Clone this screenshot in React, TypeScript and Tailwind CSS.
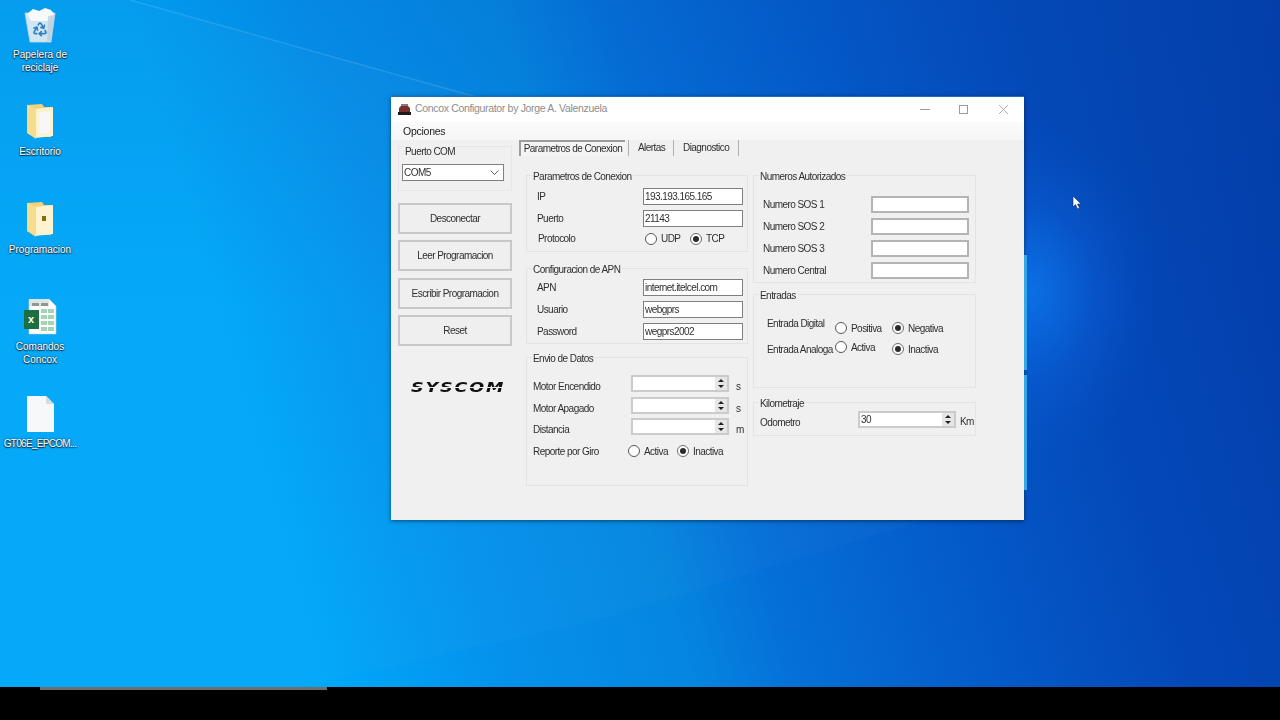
import { Recycle } from 'lucide-react';
import type { ReactNode } from 'react';

function RecycleBinIcon() {
  return (
    <svg width="32" height="36" viewBox="0 0 32 36">
      <path d="M1 6 L31 6 L27 35 L6 35 Z" fill="#e6eef3" fillOpacity="0.9" stroke="#c6d4de" strokeWidth="0.8" />
      <path d="M3 7 L9 2 L15 4 L21 1 L27 3 L30 7 L26 14 L7 14 Z" fill="#f7f9fa" />
      <path d="M24 9 L30 8 L27 34 L23 34 Z" fill="#b9cbd8" fillOpacity="0.7" />
    </svg>
  );
}

function FolderIcon({ mark }: { mark?: boolean }) {
  return (
    <svg width="27" height="36" viewBox="0 0 27 36">
      <path d="M0 1 L15 0 L17 3 L24 3 L24 33 L9 33 L0 29 Z" fill="#f2d27a" />
      <path d="M8 5 L26 3 L26 32 L8 34 Z" fill="#fdf3cf" />
      <path d="M0 1 L9 5 L9 35 L0 29 Z" fill="#f6dc8e" />
      {mark ? <rect x="15" y="14" width="4" height="5" fill="#8a6a10" /> : <path d="M12 8 H23 V29 H12 Z" fill="#f6f7f6" />}
    </svg>
  );
}

function ExcelIcon() {
  return (
    <svg width="33" height="36" viewBox="0 0 33 36">
      <path d="M5 0 H25 L32 7 V35 H5 Z" fill="#fbfcfb" stroke="#c9cfcc" strokeWidth="0.6" />
      <path d="M5 0 H25 V7 H5 Z" fill="#dfe3e1" />
      <path d="M8 4 H15 V7 H8 Z M17 4 H24 V7 H17 Z" fill="#8f9794" />
      <g fill="#a6d2b6">
        <rect x="17" y="10" width="6" height="4" />
        <rect x="24" y="10" width="6" height="4" />
        <rect x="17" y="16" width="6" height="4" />
        <rect x="24" y="16" width="6" height="4" />
        <rect x="17" y="22" width="6" height="4" />
        <rect x="24" y="22" width="6" height="4" />
        <rect x="17" y="28" width="6" height="4" />
        <rect x="24" y="28" width="6" height="4" />
      </g>
    </svg>
  );
}

function FileIcon() {
  return (
    <svg width="27" height="36" viewBox="0 0 27 36">
      <path d="M0 0 H19 L27 8 V36 H0 Z" fill="#f7f8f9" />
      <path d="M19 0 L27 8 H19 Z" fill="#d6dbe0" />
    </svg>
  );
}

function DesktopItem({ icon, label, narrow }: { icon: ReactNode; label: string[]; narrow?: boolean }) {
  return (
    <div className="flex h-[97.3px] w-[80px] flex-col items-center">
      <div className="relative flex h-[36px] items-center justify-center">{icon}</div>
      <div
        className={`mt-[5px] text-center leading-[13px] text-white [text-shadow:0_0_2px_#123,0_1px_1px_#123] ${
          narrow ? 'text-[10px] tracking-[-0.7px]' : 'text-[10px]'
        }`}
      >
        {label.map((line) => (
          <div key={line}>{line}</div>
        ))}
      </div>
    </div>
  );
}

function Group({ title, className, children }: { title: string; className: string; children?: ReactNode }) {
  return (
    <div className={`border border-[#e3e3e3] ${className}`}>
      <div className="-mt-[6px] ml-[5px] h-[14px] w-fit bg-[#f0f0f0] px-[1px] leading-[14px]">{title}</div>
      {children}
    </div>
  );
}

function TextField({ value = '', wide }: { value?: string; wide?: boolean }) {
  return (
    <input
      readOnly
      value={value}
      className={
        wide
          ? 'h-[17px] w-[98px] border-2 border-[#b4b4b4] bg-white px-[1px] outline-none'
          : 'h-[17px] w-[100px] border border-[#7f7f7f] bg-white px-[1px] outline-none'
      }
    />
  );
}

function Spinner({ value = '' }: { value?: string }) {
  return (
    <div className="flex h-[17px] w-[98px] border-2 border-[#cbcbcb] bg-white">
      <input readOnly value={value} className="h-full min-w-0 flex-1 bg-white px-[1px] leading-[12px] outline-none" />
      <div className="flex w-[12px] flex-col items-center justify-center gap-[3px] bg-[#e6e6e6]">
        <div className="h-0 w-0 border-x-[3px] border-b-[3px] border-x-transparent border-b-[#222]" />
        <div className="h-0 w-0 border-x-[3px] border-t-[3px] border-x-transparent border-t-[#222]" />
      </div>
    </div>
  );
}

function Radio({ label, checked, className = '' }: { label: string; checked?: boolean; className?: string }) {
  return (
    <div className={`flex items-center gap-[4px] ${className}`}>
      <div
        className={`flex h-[12px] w-[12px] items-center justify-center rounded-full border bg-white ${
          checked ? 'border-[#6a6a6a] bg-[#f4f4f4]' : 'border-[#555]'
        }`}
      >
        {checked ? <div className="h-[6px] w-[6px] rounded-full bg-[#2b2b2b]" /> : null}
      </div>
      <span>{label}</span>
    </div>
  );
}

function ActionButton({ label }: { label: string }) {
  return (
    <div className="flex h-[31px] w-[114px] items-center justify-center border-2 border-[#c8c8c8] bg-[#efefef]">
      {label}
    </div>
  );
}

function FieldRow({ label, children, labelWidth, indent }: { label: string; children: ReactNode; labelWidth: string; indent: string }) {
  return (
    <div className={`flex h-[17px] items-center ${indent}`}>
      <span className={labelWidth}>{label}</span>
      {children}
    </div>
  );
}

function SpinRow({ label, unit }: { label: string; unit: string }) {
  return (
    <div className="flex h-[17px] items-center pl-[6px]">
      <span className="mt-[6px] w-[98px]">{label}</span>
      <Spinner />
      <span className="ml-[7px] mt-[6px]">{unit}</span>
    </div>
  );
}

function ConfigWindow() {
  return (
    <div className="absolute left-[391px] top-[96px] flex h-[424px] w-[633px] flex-col border-t border-[#1b6fb5] bg-[#f0f0f0] text-[10px] tracking-[-0.55px] text-[#2f2f2f] shadow-[0_1px_4px_rgba(0,0,0,0.5)] blur-[0.35px] [font-family:'Liberation_Sans',Arial,sans-serif]">
      <div className="flex h-[25px] items-center bg-white pl-[7px]">
        <svg className="-mt-[2px]" width="13" height="12" viewBox="0 0 13 12">
          <path d="M3 1 H10 V3 H3 Z" fill="#8c7a78" />
          <path d="M1 5 L3 3 H10 L12 5 V10 H1 Z" fill="#7a2f2a" />
          <rect x="0" y="9" width="13" height="3" fill="#1e1a1a" />
        </svg>
        <span className="mb-[1px] ml-[4px] text-[10.5px] tracking-[-0.33px] text-[#8d8d8d]">Concox Configurator by Jorge A. Valenzuela</span>
        <div className="ml-auto flex items-center">
          <div className="mr-[29px] h-px w-[10px] bg-[#9a9a9a]" />
          <div className="mr-[31px] h-[9px] w-[9px] border border-[#9a9a9a]" />
          <svg className="mr-[16px]" width="9" height="9" viewBox="0 0 9 9">
            <path d="M0 0 L9 9 M9 0 L0 9" stroke="#9a9a9a" strokeWidth="0.8" />
          </svg>
        </div>
      </div>
      <div className="h-[18px] bg-gradient-to-b from-[#fafafa] to-[#f6f6f6] pl-[12px] text-[10.5px] leading-[18px] tracking-[-0.25px] text-[#222]">Opciones</div>
      <div className="flex pl-[7px]">
        <div className="mt-[6px] flex w-[114px] flex-col">
          <div className="h-[45px] border border-[#e6e6e6]">
            <div className="-mt-[2px] ml-[5px] w-fit bg-[#f0f0f0] px-[1px] leading-[14px]">Puerto COM</div>
            <div className="ml-[3px] mt-[5px] flex h-[17px] w-[102px] items-center justify-between border border-[#7f7f7f] bg-white pl-[1px] pr-[4px]">
              <span>COM5</span>
              <svg width="9" height="5" viewBox="0 0 9 5">
                <path d="M0.5 0.5 L4.5 4.5 L8.5 0.5" fill="none" stroke="#666" strokeWidth="1" />
              </svg>
            </div>
          </div>
          <div className="mt-[11.5px] flex flex-col gap-[6.5px]">
            <ActionButton label="Desconectar" />
            <ActionButton label="Leer Programacion" />
            <ActionButton label="Escribir Programacion" />
            <ActionButton label="Reset" />
          </div>
          <div className="relative ml-[13px] mt-[34px] w-fit origin-left scale-x-[1.25] text-[14px] font-bold italic leading-[14px] tracking-[1.5px] text-[#111] [font-family:'DejaVu_Sans',sans-serif]">
            SYSCOM
            <div className="absolute inset-x-0 top-[7px] h-px bg-[#f0f0f0]" />
          </div>
        </div>
        <div className="ml-[7px] flex flex-col">
          <div className="flex h-[16px] items-stretch whitespace-nowrap leading-[16px]">
            <div className="w-[106px] border-l-2 border-t-2 border-[#9c9c9c] bg-[#f4f4f4] text-center leading-[14px]">Parametros de Conexion</div>
            <div className="ml-[3px] w-[45px] border-l border-[#b0b0b0] pl-[9px]">Alertas</div>
            <div className="w-[65px] border-l border-[#b0b0b0] pl-[9px]">Diagnostico</div>
            <div className="border-l border-[#b0b0b0]" />
          </div>
          <div className="ml-[7px] mt-[19px] flex gap-[5px]">
            <div className="flex w-[222px] flex-col">
              <Group title="Parametros de Conexion" className="h-[77px]">
                <div className="mt-[4px] flex flex-col gap-[5px]">
                  <FieldRow label="IP" labelWidth="w-[106px]" indent="pl-[10px]">
                    <TextField value="193.193.165.165" />
                  </FieldRow>
                  <FieldRow label="Puerto" labelWidth="w-[106px]" indent="pl-[10px]">
                    <TextField value="21143" />
                  </FieldRow>
                  <FieldRow label="Protocolo" labelWidth="w-[107px]" indent="pl-[11px] -mt-[2px]">
                    <Radio label="UDP" className="w-[45px]" />
                    <Radio label="TCP" checked />
                  </FieldRow>
                </div>
              </Group>
              <Group title="Configuracion de APN" className="mt-[16px] h-[76px]">
                <div className="mt-[2px] flex flex-col gap-[5px]">
                  <FieldRow label="APN" labelWidth="w-[106px]" indent="pl-[10px]">
                    <TextField value="internet.itelcel.com" />
                  </FieldRow>
                  <FieldRow label="Usuario" labelWidth="w-[106px]" indent="pl-[10px]">
                    <TextField value="webgprs" />
                  </FieldRow>
                  <FieldRow label="Password" labelWidth="w-[106px]" indent="pl-[10px]">
                    <TextField value="wegprs2002" />
                  </FieldRow>
                </div>
              </Group>
              <Group title="Envio de Datos" className="mt-[13px] h-[129px]">
                <div className="mt-[9px] flex flex-col gap-[4.5px]">
                  <SpinRow label="Motor Encendido" unit="s" />
                  <SpinRow label="Motor Apagado" unit="s" />
                  <SpinRow label="Distancia" unit="m" />
                  <FieldRow label="Reporte por Giro" labelWidth="w-[95px]" indent="pl-[6px] mt-[3px]">
                    <Radio label="Activa" className="w-[49px]" />
                    <Radio label="Inactiva" checked />
                  </FieldRow>
                </div>
              </Group>
            </div>
            <div className="flex w-[223px] flex-col">
              <Group title="Numeros Autorizados" className="h-[108px]">
                <div className="mt-[12px] flex flex-col gap-[5px]">
                  {['Numero SOS 1', 'Numero SOS 2', 'Numero SOS 3', 'Numero Central'].map((name) => (
                    <FieldRow key={name} label={name} labelWidth="w-[108px]" indent="pl-[9px]">
                      <TextField wide />
                    </FieldRow>
                  ))}
                </div>
              </Group>
              <Group title="Entradas" className="mt-[11px] h-[94px]">
                <div className="mt-[10px] flex h-[20px] items-center pl-[13px]">
                  <span className="w-[68px]">Entrada Digital</span>
                  <Radio label="Positiva" className="mt-[10px] w-[57px]" />
                  <Radio label="Negativa" checked className="mt-[10px]" />
                </div>
                <div className="mt-[6px] flex h-[20px] items-center pl-[13px]">
                  <span className="w-[68px]">Entrada Analoga</span>
                  <Radio label="Activa" className="mb-[4px] w-[57px]" />
                  <Radio label="Inactiva" checked />
                </div>
              </Group>
              <Group title="Kilometraje" className="mt-[14px] h-[34px]">
                <div className="flex h-[17px] items-center pl-[6px]">
                  <span className="mt-[6px] w-[98px]">Odometro</span>
                  <Spinner value="30" />
                  <span className="ml-[4px] mt-[3px]">Km</span>
                </div>
              </Group>
            </div>
          </div>
        </div>
      </div>
    </div>
  );
}

export default function App() {
  return (
    <div className="flex h-[720px] w-[1280px] flex-col overflow-hidden bg-black [font-family:'Liberation_Sans',Arial,sans-serif]">
      <div className="relative h-[687px] bg-[linear-gradient(to_bottom,rgba(5,80,180,0.14),rgba(5,80,180,0)_45%),radial-gradient(ellipse_130px_170px_at_1030px_290px,rgba(14,120,240,0.8)_0%,rgba(14,110,235,0.3)_50%,rgba(14,110,235,0.08)_80%,rgba(14,110,235,0)_100%),linear-gradient(74deg,#00a8f8_0%,#00a8f8_22%,#0592ec_34%,#0586e0_47%,#0570d8_54%,#0458c8_69%,#0448b8_81%,#033ca8_100%)]">
        <svg className="absolute inset-0" width="1280" height="687" viewBox="0 0 1280 687">
          <path d="M130 0 L480 98 L925 520 L604 618 L300 687 L0 687 L0 0 Z" fill="#fff" fillOpacity="0.02" />
          <path d="M130 0 L480 98" stroke="#fff" strokeOpacity="0.12" strokeWidth="1.5" />
        </svg>
        <div className="relative flex w-[80px] flex-col pt-[7px]">
          <DesktopItem
            icon={
              <>
                <RecycleBinIcon />
                <Recycle className="absolute left-[8px] top-[14px] text-[#2f7fc4]" size={16} strokeWidth={2.5} />
              </>
            }
            label={['Papelera de', 'reciclaje']}
          />
          <DesktopItem icon={<FolderIcon />} label={['Escritorio']} />
          <DesktopItem icon={<FolderIcon mark />} label={['Programacion']} />
          <DesktopItem
            icon={
              <>
                <ExcelIcon />
                <div className="absolute left-0 top-[11px] flex h-[19px] w-[15px] items-center justify-center bg-[#1d6f42] text-[11px] font-bold text-white">x</div>
              </>
            }
            label={['Comandos', 'Concox']}
          />
          <DesktopItem icon={<FileIcon />} label={['GT06E_EPCOM...']} narrow />
        </div>
        <ConfigWindow />
        <div className="absolute left-[1024px] top-[255px] flex w-[3px] flex-col gap-[5px]">
          <div className="h-[115px] bg-[#35a6e6]" />
          <div className="h-[115px] bg-[#35a6e6]" />
        </div>
        <svg className="absolute left-[1072px] top-[195px]" width="10" height="15" viewBox="0 0 10 15">
          <path d="M1 1 V12 L3.5 9.5 L5.5 14 L7.5 13 L5.5 9 H9 Z" fill="#fff" stroke="#1a2a50" strokeWidth="0.6" />
        </svg>
      </div>
      <div className="h-[33px]">
        <div className="ml-[40px] h-[3px] w-[287px] bg-[#6e6e6e]" />
      </div>
    </div>
  );
}
